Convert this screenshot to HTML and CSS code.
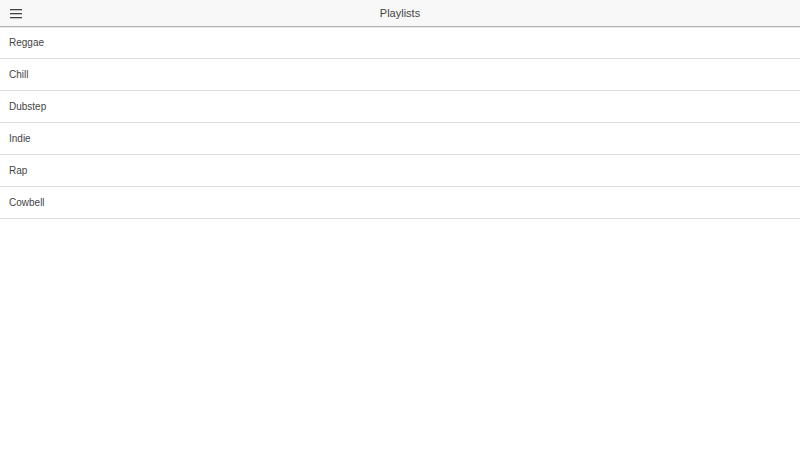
FILE: index.html
```html
<!DOCTYPE html>
<html>
<head>
<meta charset="utf-8">
<link rel="stylesheet" href="styles.css">
</head>
<body>
<div class="app">
  <header class="bar">
    <button class="menu-btn" aria-label="Menu">
      <svg width="12" height="10" viewBox="0 0 12 10"><rect x="0" y="0" width="12" height="1.3" fill="#444"/><rect x="0" y="4" width="12" height="1.3" fill="#444"/><rect x="0" y="8" width="12" height="1.3" fill="#444"/></svg>
    </button>
    <h1 class="title">Playlists</h1>
  </header>
  <ul class="list">
    <li class="item">Reggae</li>
    <li class="item">Chill</li>
    <li class="item">Dubstep</li>
    <li class="item">Indie</li>
    <li class="item">Rap</li>
    <li class="item">Cowbell</li>
  </ul>
</div>
</body>
</html>
```
FILE: styles.css
```css
html, body { margin: 0; padding: 0; background: #fff; }
body { font-family: "Liberation Sans", Arial, sans-serif; color: #444; }
.app { width: 800px; height: 450px; overflow: hidden; }
.bar {
  position: relative;
  height: 26px;
  background: #f8f8f8;
  border-bottom: 1px solid #b2b2b2;
  box-shadow: 0 1px 0 #e8e8e8;
  display: flex;
  align-items: center;
  justify-content: center;
}
.menu-btn {
  position: absolute;
  left: 10px; top: 9px;
  padding: 0; margin: 0; border: 0; background: none;
  width: 12px; height: 10px; display: block;
}
.menu-btn svg { display: block; }
.title { margin: 0; font-size: 11px; font-weight: normal; color: #444; }
.list { list-style: none; margin: 0; padding: 0; }
.item {
  height: 31px;
  border-bottom: 1px solid #ddd;
  display: flex; align-items: center;
  padding-left: 9px;
  font-size: 10px;
  color: #444;
}
```
